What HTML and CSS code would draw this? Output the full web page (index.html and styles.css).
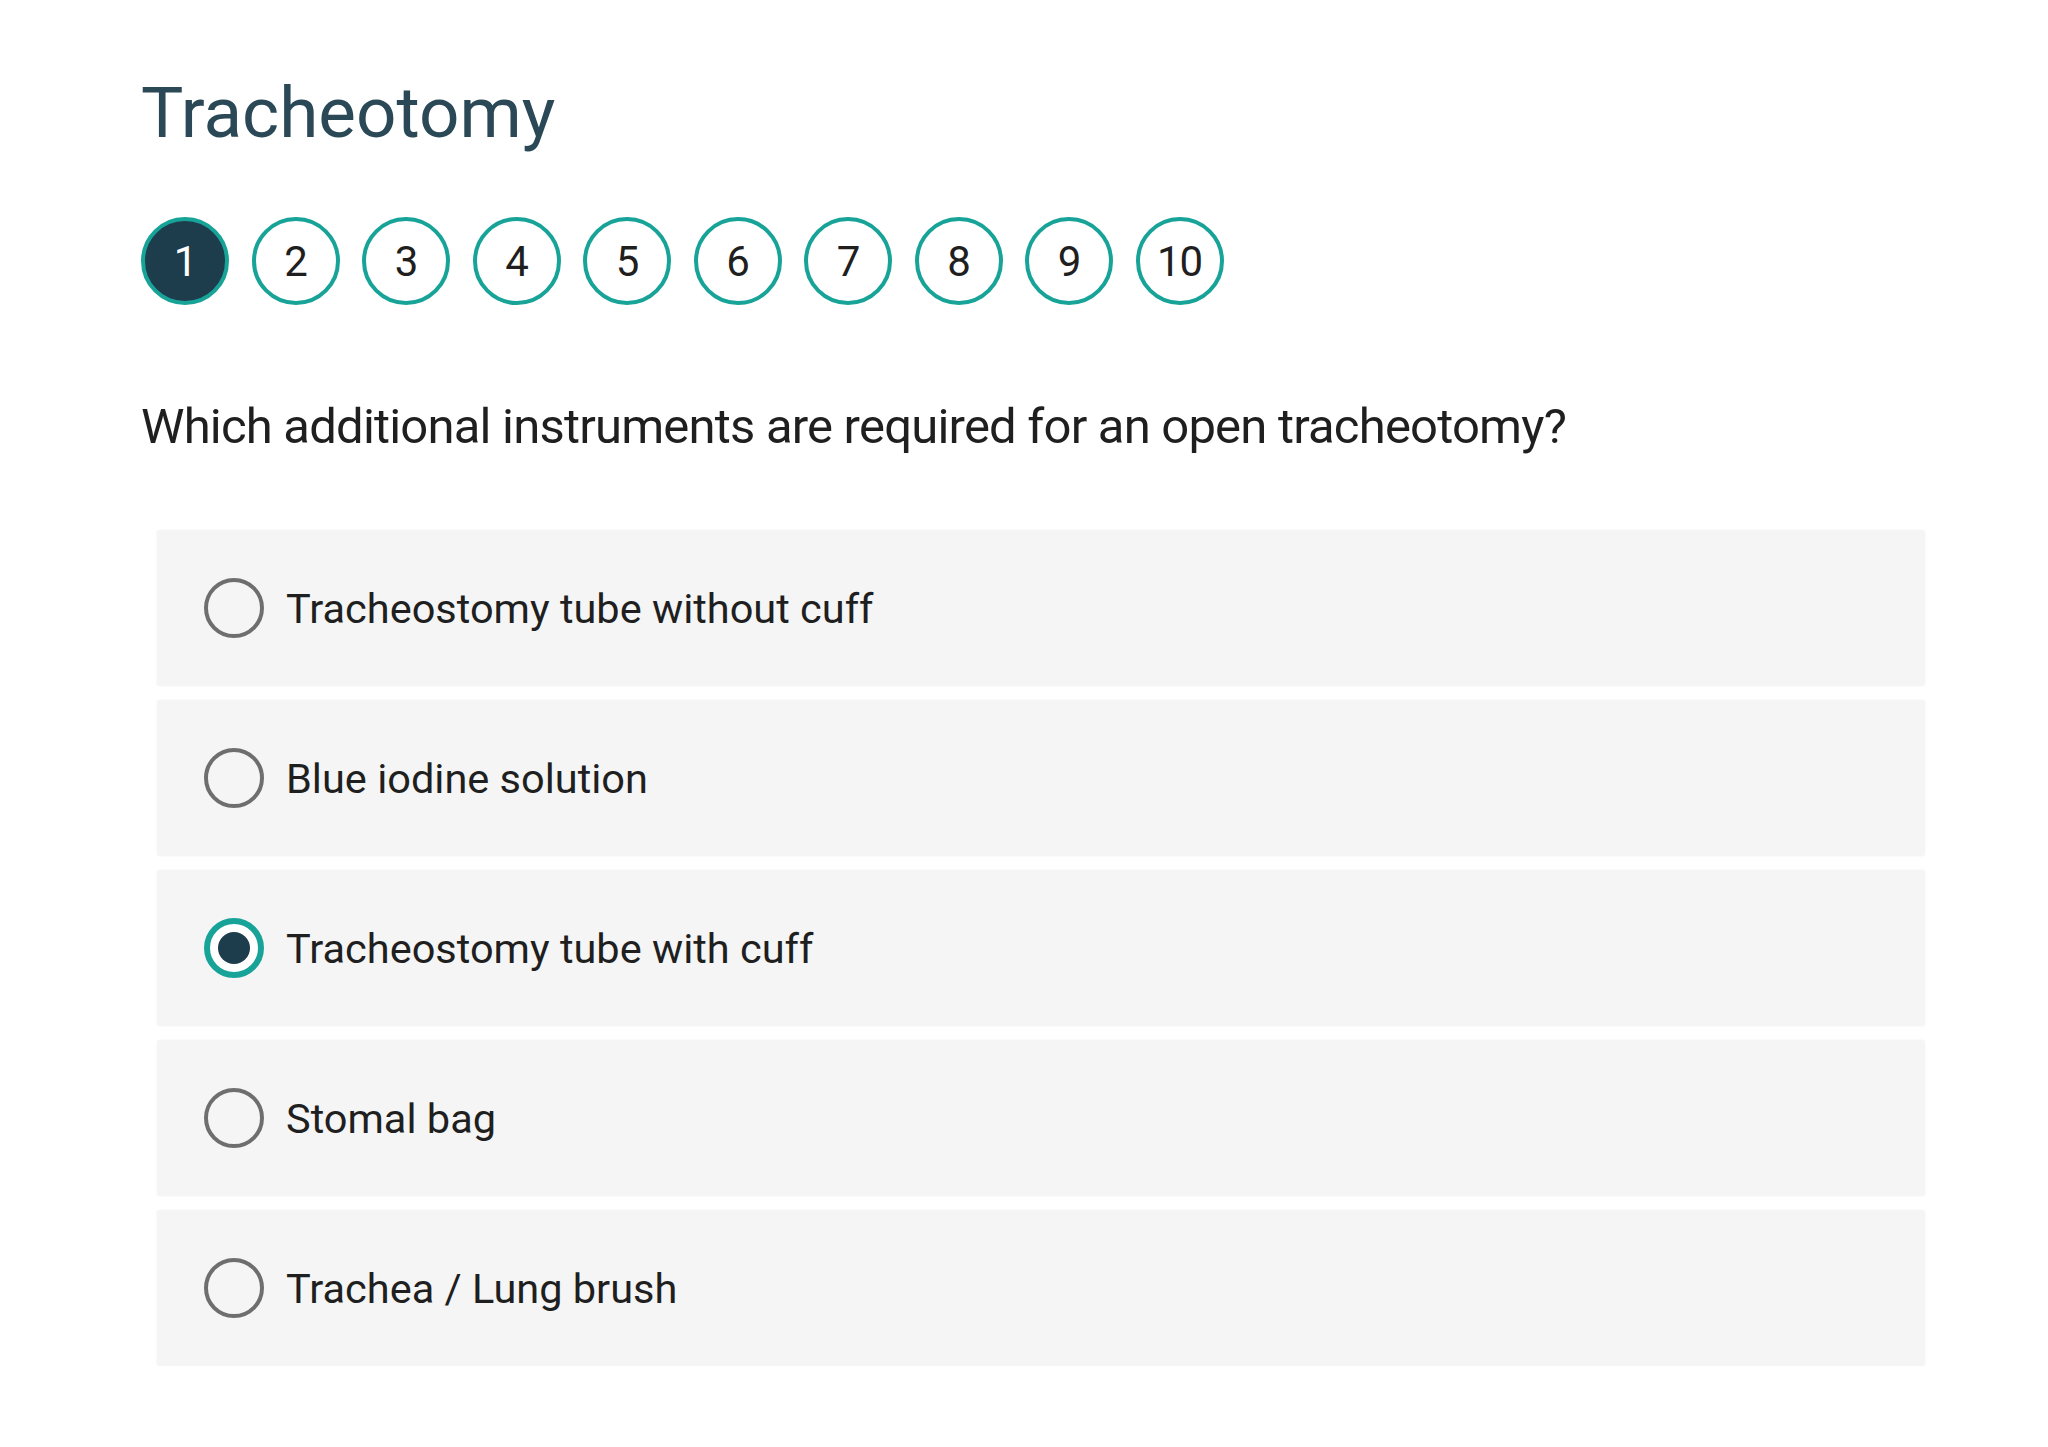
FILE: index.html
```html
<!DOCTYPE html>
<html lang="en">
<head>
<meta charset="utf-8">
<title>Tracheotomy</title>
<link rel="stylesheet" href="styles.css">
</head>
<body>
<main class="quiz">
  <h1 class="title">Tracheotomy</h1>
  <nav class="steps">
    <span class="step active">1</span>
    <span class="step">2</span>
    <span class="step">3</span>
    <span class="step">4</span>
    <span class="step">5</span>
    <span class="step">6</span>
    <span class="step">7</span>
    <span class="step">8</span>
    <span class="step">9</span>
    <span class="step">10</span>
  </nav>
  <p class="question">Which additional instruments are required for an open tracheotomy?</p>
  <div class="options">
    <label class="option"><span class="radio"></span><span class="label">Tracheostomy tube without cuff</span></label>
    <label class="option"><span class="radio"></span><span class="label">Blue iodine solution</span></label>
    <label class="option"><span class="radio checked"></span><span class="label">Tracheostomy tube with cuff</span></label>
    <label class="option"><span class="radio"></span><span class="label">Stomal bag</span></label>
    <label class="option"><span class="radio"></span><span class="label">Trachea / Lung brush</span></label>
  </div>
</main>
</body>
</html>
```
FILE: styles.css
```css
html, body {
  margin: 0;
  padding: 0;
  background: #ffffff;
}
body {
  font-family: Roboto, "Liberation Sans", sans-serif;
  color: #1f1f1f;
}
.quiz {
  padding: 77px 0 0 141px;
  width: 1784px;
}
.title {
  margin: 0;
  font-size: 71px;
  font-weight: 400;
  line-height: 1;
  color: #2b4856;
}
.steps {
  display: flex;
  gap: 22.5px;
  margin-top: 69px;
}
.step {
  box-sizing: border-box;
  width: 88px;
  height: 88px;
  border-radius: 50%;
  border: 4px solid #17a398;
  display: flex;
  align-items: center;
  justify-content: center;
  font-size: 42px;
  color: #1f1f1f;
  letter-spacing: -1px;
}
.step.active {
  background: #1d3c4c;
  color: #ffffff;
}
.question {
  margin: 97px 0 0 0;
  font-size: 49px;
  letter-spacing: -0.8px;
  line-height: 1;
  color: #1f1f1f;
}
.options {
  display: flex;
  flex-direction: column;
  gap: 14px;
  margin-top: 79px;
  margin-left: 16px;
}
.option {
  display: flex;
  align-items: center;
  height: 156px;
  background: #f5f5f5;
  border-radius: 3px;
  box-shadow: 0 0 3px rgba(0, 0, 0, 0.05);
  padding-left: 47px;
}
.radio {
  box-sizing: border-box;
  width: 60px;
  height: 60px;
  border-radius: 50%;
  border: 4px solid #6e6e6e;
  flex: none;
  display: flex;
  align-items: center;
  justify-content: center;
}
.radio.checked {
  border: 6px solid #17a398;
  background: #ffffff;
}
.radio.checked::after {
  content: "";
  width: 32px;
  height: 32px;
  border-radius: 50%;
  background: #1d3c4c;
}
.label {
  margin-left: 22px;
  font-size: 41.5px;
  color: #1f1f1f;
}
```
